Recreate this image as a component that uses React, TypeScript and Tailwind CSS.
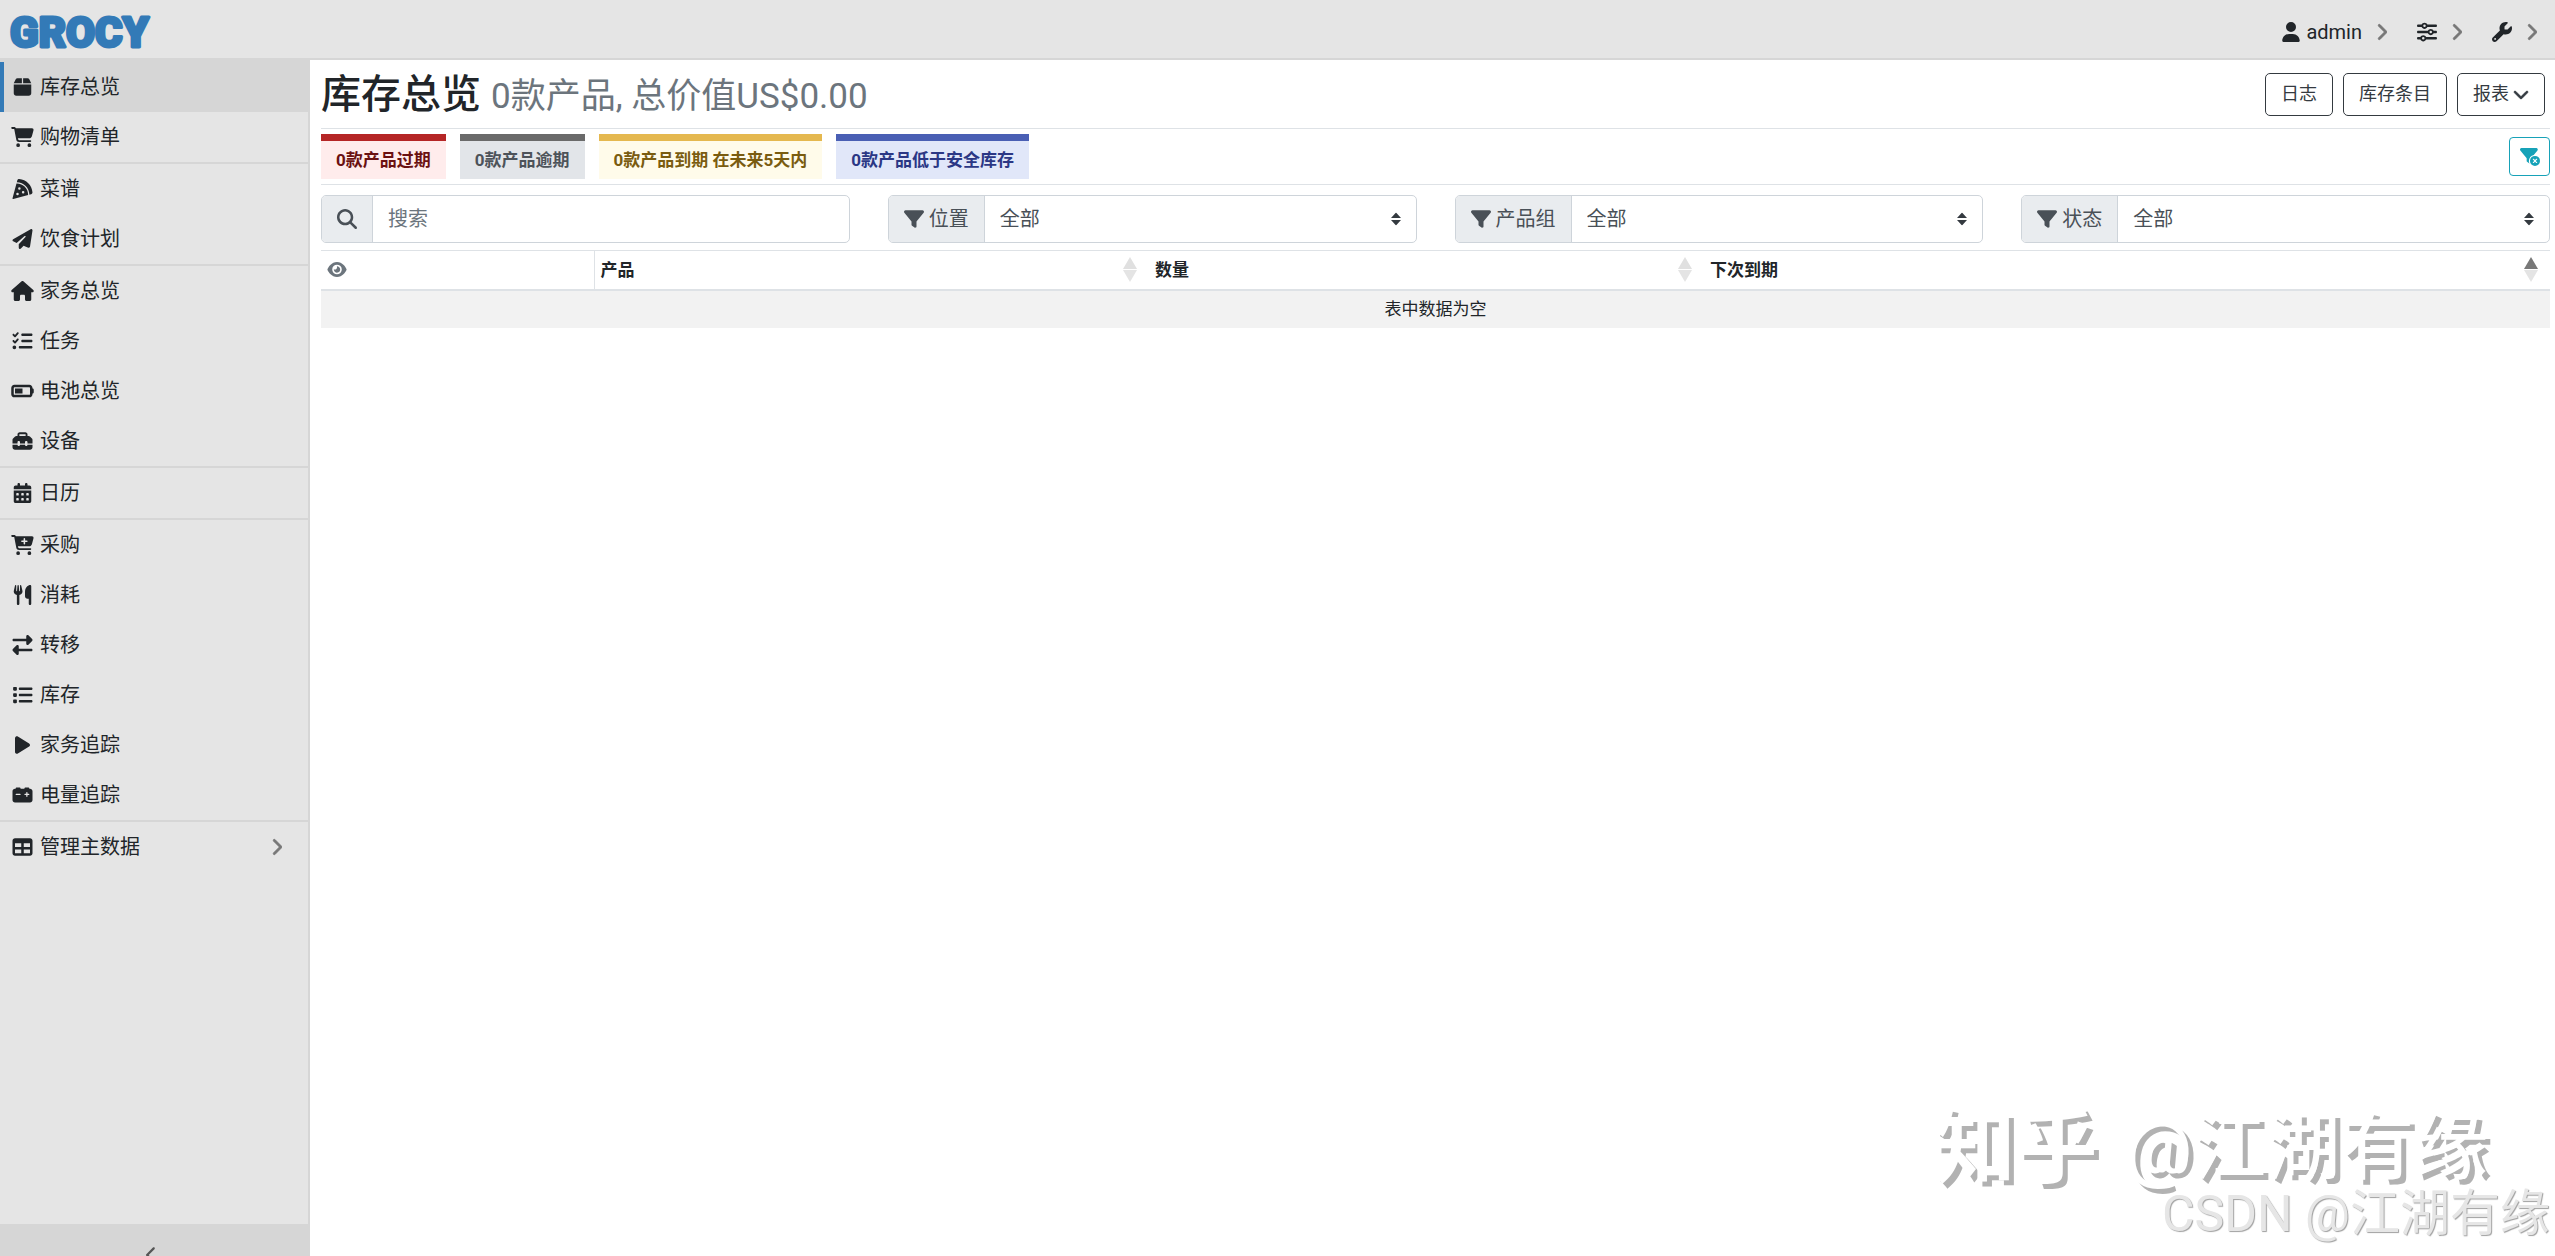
import React from 'react';
import type { IconType } from 'react-icons';
import {
  FaBatteryHalf,
  FaBox,
  FaCalendarDays,
  FaCarBattery,
  FaCartPlus,
  FaCartShopping,
  FaChevronDown,
  FaChevronLeft,
  FaChevronRight,
  FaEye,
  FaFilter,
  FaFilterCircleXmark,
  FaHouse,
  FaList,
  FaListCheck,
  FaMagnifyingGlass,
  FaPaperPlane,
  FaPizzaSlice,
  FaPlay,
  FaRightLeft,
  FaSliders,
  FaTable,
  FaToolbox,
  FaUser,
  FaUtensils,
  FaWrench,
} from 'react-icons/fa6';

interface NavItem {
  label: string;
  icon: IconType;
  active?: boolean;
  expandable?: boolean;
}

const NAV_GROUPS: NavItem[][] = [
  [
    { label: '库存总览', icon: FaBox, active: true },
    { label: '购物清单', icon: FaCartShopping },
  ],
  [
    { label: '菜谱', icon: FaPizzaSlice },
    { label: '饮食计划', icon: FaPaperPlane },
  ],
  [
    { label: '家务总览', icon: FaHouse },
    { label: '任务', icon: FaListCheck },
    { label: '电池总览', icon: FaBatteryHalf },
    { label: '设备', icon: FaToolbox },
  ],
  [{ label: '日历', icon: FaCalendarDays }],
  [
    { label: '采购', icon: FaCartPlus },
    { label: '消耗', icon: FaUtensils },
    { label: '转移', icon: FaRightLeft },
    { label: '库存', icon: FaList },
    { label: '家务追踪', icon: FaPlay },
    { label: '电量追踪', icon: FaCarBattery },
  ],
  [{ label: '管理主数据', icon: FaTable, expandable: true }],
];

const STATUS_CHIPS = [
  { label: '0款产品过期', style: 'border-[#b52626] bg-[#ffecec] text-[#6b1111]' },
  { label: '0款产品逾期', style: 'border-[#6a6a6a] bg-[#e2e5e9] text-[#4d535a]' },
  { label: '0款产品到期 在未来5天内', style: 'border-[#e5b84f] bg-[#fffbea] text-[#7a5c10]' },
  { label: '0款产品低于安全库存', style: 'border-[#4a5fb4] bg-[#e1e7f9] text-[#2b3785]' },
];

const FILTERS = [
  { id: 'location', label: '位置' },
  { id: 'group', label: '产品组' },
  { id: 'status', label: '状态' },
];

const Logo = () => (
  <a href="#" aria-label="grocy" className="flex h-full items-center pl-2">
    <svg width="170" height="58" viewBox="0 0 170 58">
      <text
        x="2"
        y="47"
        className="fill-[#337ab7] stroke-[#337ab7] font-[Roboto,sans-serif] text-[42px] leading-none font-black"
        strokeWidth="3"
        strokeLinejoin="round"
      >
        GROCY
      </text>
    </svg>
  </a>
);

const MenuChevron = ({ className = '' }: { className?: string }) => (
  <FaChevronRight className={`h-[18px] w-[11px] text-[#777] [stroke-width:20] ${className}`} />
);

const SortArrows = ({ sorted = false }: { sorted?: boolean }) => (
  <svg width="14" height="25" viewBox="0 0 14 25" aria-hidden="true">
    <path d="M7 0l7 12H0z" fill={sorted ? '#787878' : '#e0e0e0'} />
    <path d="M7 25l7-12H0z" fill="#e4e4e4" />
  </svg>
);

const Sidebar = () => (
  <aside className="flex w-[310px] shrink-0 flex-col border-r-2 border-[#d6d6d6] bg-[#e5e5e5]">
    <nav className="flex-1">
      {NAV_GROUPS.map((group, i) => (
        <ul key={i} className="border-t-2 border-[#d6d6d6]">
          {group.map(({ label, icon: Icon, active, expandable }) => (
            <li key={label}>
              <a
                href="#"
                className={`flex h-[50px] items-center border-l-4 pl-[6px] pr-[26px] ${
                  active ? 'border-[#337ab7] bg-[#d6d6d6]' : 'border-transparent'
                }`}
              >
                <span className="mr-[5px] flex w-[25px] justify-center">
                  <Icon className="h-5 w-[23px]" />
                </span>
                <span>{label}</span>
                {expandable && <MenuChevron className="ml-auto" />}
              </a>
            </li>
          ))}
        </ul>
      ))}
    </nav>
    <button aria-label="收起侧栏" className="flex h-8 shrink-0 items-start justify-center overflow-hidden bg-[#d6d6d6] pt-[22px] pr-[6px]">
      <FaChevronLeft className="h-[18px] w-[11px] shrink-0 text-[#555]" />
    </button>
  </aside>
);

const OutlineButton = ({ children }: { children: React.ReactNode }) => (
  <button className="flex h-[43px] items-center gap-1 rounded-[5px] border border-[#343a40] px-[15px] text-[18px] leading-none text-[#343a40]">
    {children}
  </button>
);

const StockTable = () => (
  <table className="w-full table-fixed border-t border-[#dee2e6] text-[17px] leading-[24px]">
    <thead>
      <tr className="h-[39px] border-b-2 border-[#dee2e6] text-left">
        <th className="w-[273px] border-r border-[#dee2e6] px-[6px] font-bold">
          <button aria-label="显示列" className="flex text-[#6c757d]">
            <FaEye className="h-[17px] w-5" />
          </button>
        </th>
        <th className="w-[24.9%] px-[6px] font-bold">
          <div className="flex items-center justify-between pr-[6px]">产品<SortArrows /></div>
        </th>
        <th className="w-[24.9%] px-[6px] font-bold">
          <div className="flex items-center justify-between pr-[6px]">数量<SortArrows /></div>
        </th>
        <th className="px-[6px] font-bold">
          <div className="flex items-center justify-between pr-[6px]">下次到期<SortArrows sorted /></div>
        </th>
      </tr>
    </thead>
    <tbody>
      <tr className="h-[38px] bg-[#f2f2f2]">
        <td colSpan={4} className="text-center">表中数据为空</td>
      </tr>
    </tbody>
  </table>
);

export default function App() {
  return (
    <div className="relative flex h-screen flex-col overflow-hidden bg-white font-[Roboto,'Noto_Sans_CJK_SC',sans-serif] text-[20px] leading-[30px] text-[#212529]">
      <header className="flex h-[60px] shrink-0 items-center justify-between border-b-2 border-[#d6d6d6] bg-[#e5e5e5]">
        <Logo />
        <div className="flex items-center gap-[30px] pr-[18px] pt-[6px]">
          <button className="flex items-center">
            <FaUser className="mr-[6px] h-5 w-[18px]" />
            admin
            <MenuChevron className="ml-[14px]" />
          </button>
          <button aria-label="设置" className="flex items-center">
            <FaSliders className="h-5 w-5" />
            <MenuChevron className="ml-[14px]" />
          </button>
          <button aria-label="工具" className="flex items-center">
            <FaWrench className="h-5 w-5" />
            <MenuChevron className="ml-[14px]" />
          </button>
        </div>
      </header>

      <div className="flex min-h-0 flex-1">
        <Sidebar />
        <main className="min-w-0 flex-1 pl-[11px] pr-[5px]">
          <div className="flex h-[68px] items-center justify-between pr-[5px]">
            <h2 className="flex items-baseline gap-[10px] pt-1 text-[40px] font-medium leading-[48px]">
              库存总览
              <span className="text-[35px] font-normal text-[#6c757d]">0款产品, 总价值US$0.00</span>
            </h2>
            <div className="flex gap-[10px]">
              <OutlineButton>日志</OutlineButton>
              <OutlineButton>库存条目</OutlineButton>
              <OutlineButton>
                报表
                <FaChevronDown className="h-4 w-4 [stroke-width:20]" />
              </OutlineButton>
            </div>
          </div>

          <div className="flex items-center justify-between border-y border-[#dee2e6] py-[5px]">
            <div className="flex gap-[14px]">
              {STATUS_CHIPS.map((chip) => (
                <button
                  key={chip.label}
                  className={`h-[45px] border-t-[7px] px-[15px] text-[17px] font-bold leading-[26px] ${chip.style}`}
                >
                  {chip.label}
                </button>
              ))}
            </div>
            <button aria-label="清除筛选" className="flex h-[39px] w-[41px] items-center justify-center rounded-[4px] border border-[#17a2b8] text-[#17a2b8]">
              <FaFilterCircleXmark className="h-[18px] w-5" />
            </button>
          </div>

          <div className="grid grid-cols-4 gap-x-[38px] pb-[7px] pt-[10px]">
            <div className="flex h-12 overflow-hidden rounded-[5px] border border-[#ced4da]">
              <label htmlFor="search" className="flex w-[51px] items-center justify-center border-r border-[#ced4da] bg-[#e9ecef] text-[#495057]">
                <FaMagnifyingGlass className="h-5 w-5" />
              </label>
              <input id="search" type="text" placeholder="搜索" className="min-w-0 flex-1 px-[15px] placeholder:text-[#6c757d]" />
            </div>
            {FILTERS.map(({ id, label }) => (
              <div key={id} className="flex h-12 overflow-hidden rounded-[5px] border border-[#ced4da] text-[#495057]">
                <label htmlFor={id} className="flex items-center gap-[5px] border-r border-[#ced4da] bg-[#e9ecef] px-[15px]">
                  <FaFilter className="h-5 w-5" />
                  {label}
                </label>
                <div className="relative flex-1">
                  <select id={id} className="h-full w-full appearance-none px-[15px]">
                    <option>全部</option>
                  </select>
                  <svg className="pointer-events-none absolute right-[15px] top-1/2 -translate-y-1/2" width="10" height="13" viewBox="0 0 10 13">
                    <path d="M5 0l5 5.5H0zM5 13l5-5.5H0z" fill="#343a40" />
                  </svg>
                </div>
              </div>
            ))}
          </div>

          <StockTable />
        </main>
      </div>

      <div className="pointer-events-none absolute bottom-0 right-[5px] flex flex-col items-end whitespace-nowrap">
        <div className="mr-[62px] flex items-center gap-7 text-[74px] leading-[60px] text-white [text-shadow:5px_5px_0_#b2b2b2]">
          <span className="text-[82px] font-bold">知乎</span>
          <span className="font-medium">@江湖有缘</span>
        </div>
        <div className="pb-[6px] text-[50px] leading-[72px] text-[#e6e6e6] [text-shadow:1px_1px_1px_#a0a0a0]">CSDN @江湖有缘</div>
      </div>
    </div>
  );
}
